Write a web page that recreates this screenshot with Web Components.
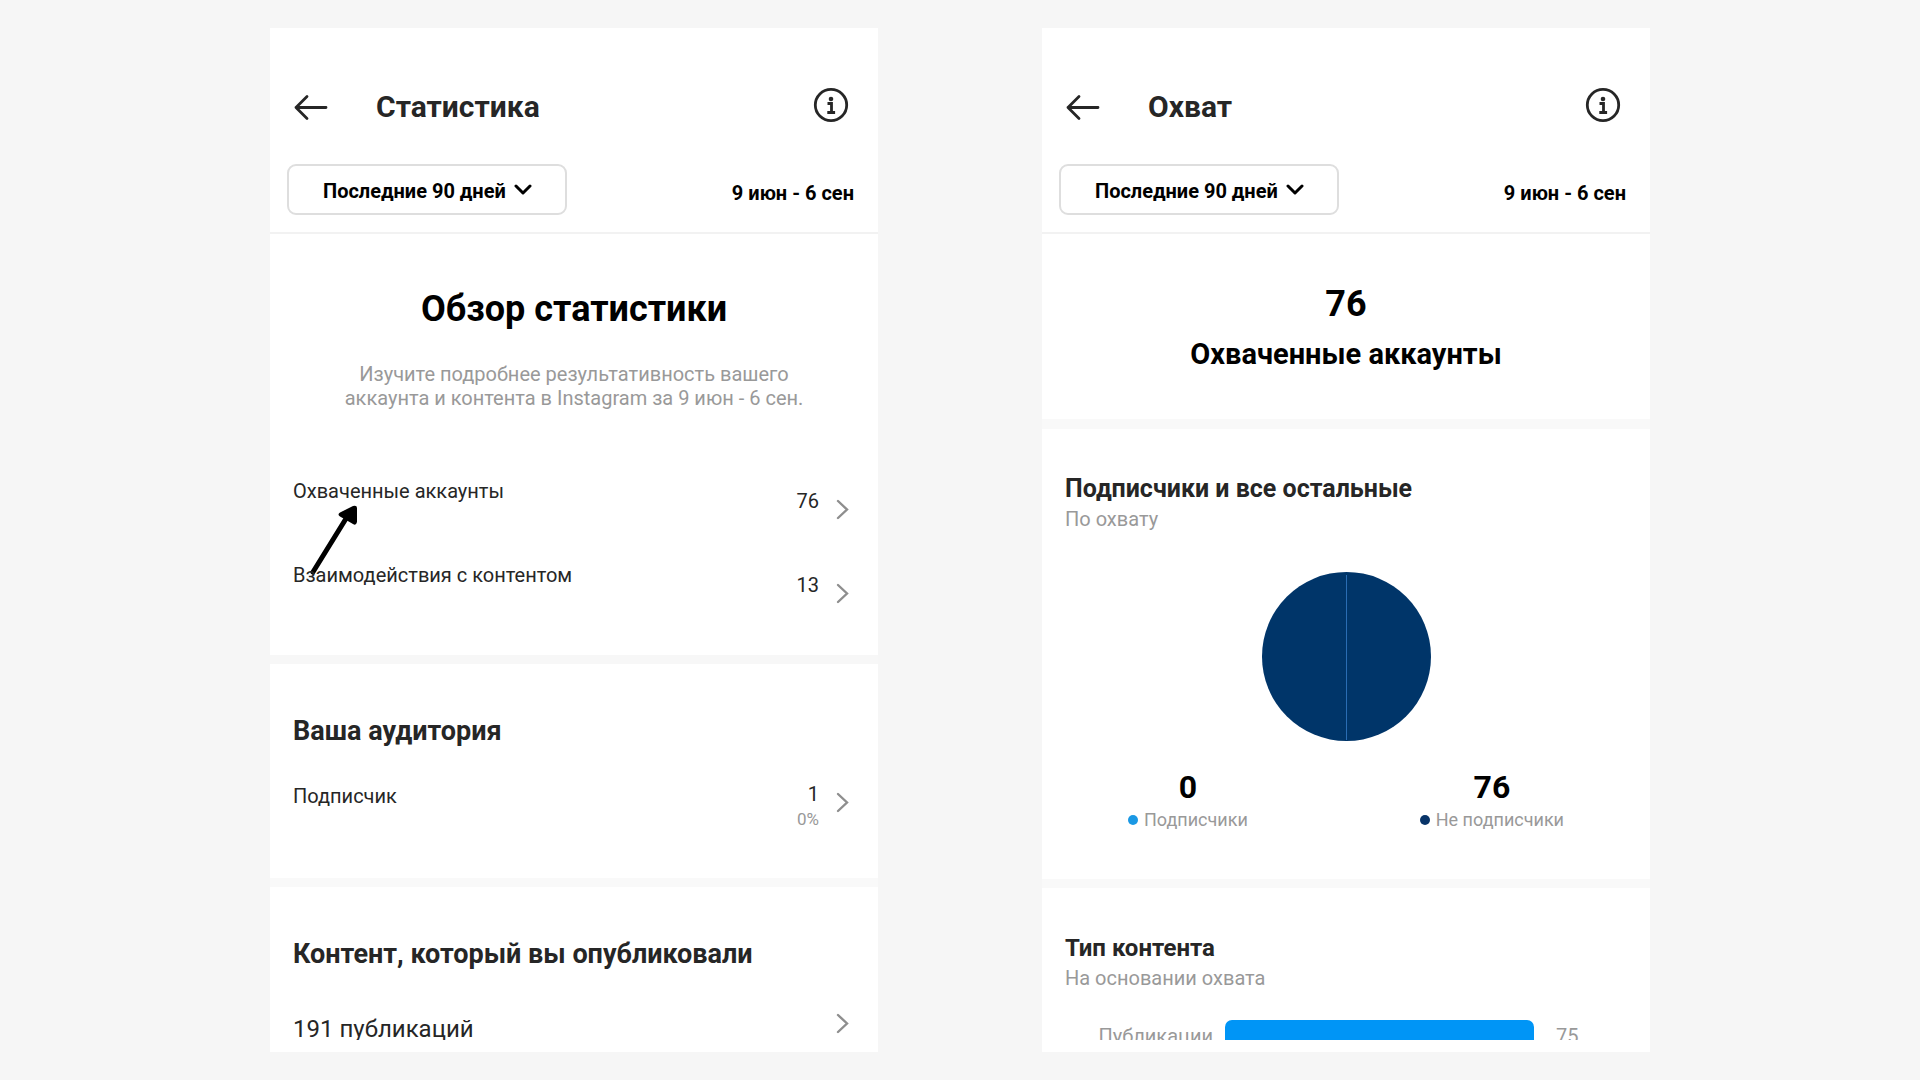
<!DOCTYPE html>
<html lang="ru">
<head>
<meta charset="utf-8">
<meta name="viewport" content="width=device-width, initial-scale=1">
<title>Статистика</title>
<style>
  * { box-sizing: border-box; }
  body {
    margin: 0;
    background: #f6f6f6;
    color: #262626;
    font-family: Roboto, "Liberation Sans", sans-serif;
    font-size: 20px;
    line-height: 24px;
  }
  main {
    display: grid;
    grid-template-columns: repeat(2, minmax(0, 608px));
    justify-content: center;
    gap: 164px;
    height: 100vh;
    padding: 28px 0;
  }
</style>
</head>
<body>
<main>
  <insight-screen heading="Статистика">
    <insight-section class="overview">
      <overview-intro>
        <span slot="title">Обзор статистики</span>
        Изучите подробнее результативность вашего аккаунта и контента в Instagram за 9 июн - 6 сен.
      </overview-intro>
      <metric-row value="76" pointer>Охваченные аккаунты</metric-row>
      <metric-row value="13">Взаимодействия с контентом</metric-row>
    </insight-section>
    <insight-section class="audience" heading="Ваша аудитория">
      <metric-row kind="detail" value="1" detail="0%">Подписчик</metric-row>
    </insight-section>
    <insight-section class="content" heading="Контент, который вы опубликовали">
      <metric-row kind="large">191 публикаций</metric-row>
    </insight-section>
  </insight-screen>

  <insight-screen heading="Охват">
    <insight-section class="reach">
      <reach-total value="76">Охваченные аккаунты</reach-total>
    </insight-section>
    <insight-section class="split" heading="Подписчики и все остальные" note="По охвату">
      <split-chart>
        <legend-item value="0" style="--dot:#1a98e4">Подписчики</legend-item>
        <legend-item value="76" style="--dot:#083468">Не подписчики</legend-item>
      </split-chart>
    </insight-section>
    <insight-section class="types" heading="Тип контента" note="На основании охвата">
      <bar-row value="75">Публикации</bar-row>
    </insight-section>
  </insight-screen>
</main>

<script>
  const reset = `*{box-sizing:border-box}h1,h2,h3,p{margin:0}`;

  function define(name, render) {
    customElements.define(name, class extends HTMLElement {
      constructor() {
        super();
        this.attachShadow({ mode: 'open' });
      }
      connectedCallback() {
        const template = document.createElement('template');
        template.innerHTML = render(this);
        this.shadowRoot.replaceChildren(template.content.cloneNode(true));
      }
    });
  }

  define('period-filter', () => `
    <style>${reset}
      :host { display: flex; justify-content: space-between; padding: 0 24px 17px 17px; border-bottom: 2px solid #f2f2f2; color: #000; font-weight: 700; }
      .box { display: grid; align-items: center; width: 280px; }
      select, svg { grid-area: 1 / 1; }
      select { appearance: none; width: 100%; height: 51px; padding: 2px 0 0 34px; border: 2px solid #dedede; border-radius: 9px; background: #fff; color: inherit; font: inherit; cursor: pointer; }
      svg { justify-self: end; margin-right: 35px; pointer-events: none; }
      time { align-self: center; padding-top: 6px; }
    </style>
    <label class="box">
      <select aria-label="Период"><option>Последние 90 дней</option></select>
      <svg width="18" height="12" viewBox="0 0 18 12" fill="none" stroke="#000" stroke-width="3" stroke-linecap="round" stroke-linejoin="round"><path d="M2 2l7 7 7-7"/></svg>
    </label>
    <time>9 июн - 6 сен</time>`);

  define('insight-screen', el => `
    <style>${reset}
      :host { display: flex; flex-direction: column; min-width: 0; min-height: 0; padding-bottom: 12px; background: #fff; }
      header { display: flex; align-items: center; padding: 61px 29px 39px 23px; }
      h1 { flex: 1; margin-left: 47px; font-size: 30px; line-height: 36px; font-weight: 700; }
      button { display: block; height: 36px; padding: 0; border: 0; background: none; color: inherit; cursor: pointer; }
      svg { display: block; overflow: visible; }
      .body { flex: 1; min-height: 0; overflow: hidden; }
    </style>
    <header>
      <button aria-label="Назад">
        <svg width="36" height="36" viewBox="0 0 36 36" fill="none" stroke="currentColor" stroke-width="2.8" stroke-linecap="round" stroke-linejoin="round"><path d="M33 18.500H3M14 7.500L3 18.500l11 11"/></svg>
      </button>
      <h1>${el.getAttribute('heading')}</h1>
      <button aria-label="Информация">
        <svg width="36" height="36" viewBox="0 0 36 36" fill="none" stroke="currentColor" stroke-width="2.8"><circle cx="18" cy="16" r="15.700"/><circle cx="18" cy="10" r="2.300" fill="currentColor" stroke="none"/><path d="M14.500 14.500h4v8.500M14.300 23.500h7.800" stroke-width="2.8"/></svg>
      </button>
    </header>
    <period-filter></period-filter>
    <div class="body"><slot></slot></div>`);

  define('insight-section', el => {
    const heading = el.getAttribute('heading');
    const note = el.getAttribute('note');
    return `
    <style>${reset}
      :host { display: block; border-bottom: 9px solid #f9f9f9; }
      :host(.overview) { padding: 53px 0 8px; border-color: #f7f7f7; }
      :host(.audience) { padding: 51px 0 46px; --heading-gap: 35px; }
      :host(.content) { padding: 51px 0 46px; --heading-gap: 43px; }
      :host(.reach) { padding: 48px 0 47px; border-width: 10px; }
      :host(.split) { padding: 46px 0 49px; --heading-gap: 41px; --heading-size: 25px; }
      :host(.types) { padding: 46px 0 49px; --heading-gap: 30px; --heading-size: 24px; }
      .head { padding: 0 23px; margin-bottom: var(--heading-gap); }
      h2 { font-size: 27px; line-height: 32px; font-weight: 700; }
      h2.noted { font-size: var(--heading-size); line-height: 28px; }
      p { margin-top: 4px; color: #999; }
    </style>
    ${heading ? `<div class="head"><h2 class="${note ? 'noted' : ''}">${heading}</h2>${note ? `<p>${note}</p>` : ''}</div>` : ''}
    <slot></slot>`;
  });

  define('overview-intro', () => `
    <style>${reset}
      :host { display: block; padding: 0 64px; margin-bottom: 69px; text-align: center; }
      h2 { margin-bottom: 31px; color: #000; font-size: 36px; line-height: 44px; font-weight: 700; }
      p { color: #999; }
    </style>
    <h2><slot name="title"></slot></h2>
    <p><slot></slot></p>`);

  define('metric-row', el => `
    <style>${reset}
      :host { display: block; position: relative; --label-top: 0px; --value-top: 10px; --chevron-top: 20px; --row: 84px; }
      :host([kind=detail]) { --label-top: 2px; --value-top: 0px; --chevron-top: 10px; --row: 50px; }
      :host([kind=large]) { --label-top: 2px; --chevron-top: 0px; --row: 36px; }
      a { display: flex; align-items: flex-start; min-height: var(--row); padding: 0 29px 0 23px; color: inherit; text-decoration: none; }
      .label { flex: 1; padding-top: var(--label-top); }
      :host([kind=large]) .label { font-size: 24px; line-height: 28px; }
      .value { padding-top: var(--value-top); text-align: right; }
      small { display: block; color: #999; font-size: 17px; line-height: 26px; }
      .chevron { margin: var(--chevron-top) 0 0 17px; }
      .pointer { position: absolute; left: 37px; top: 22px; }
    </style>
    <a href="#">
      <span class="label"><slot></slot></span>
      <span class="value">${el.getAttribute('value') || ''}${el.hasAttribute('detail') ? `<small>${el.getAttribute('detail')}</small>` : ''}</span>
      <svg class="chevron" width="13" height="21" viewBox="0 0 13 21" fill="none" stroke="#8e8e8e" stroke-width="2.4" stroke-linecap="round"><path d="M2 2l9 8.500L2 19"/></svg>
    </a>
    ${el.hasAttribute('pointer') ? `<svg class="pointer" width="56" height="76" viewBox="0 0 56 76"><path d="M6 71L40 16" stroke="#000" stroke-width="5" stroke-linecap="round"/><path d="M33 11.500L46 5q4-1 4 2V21q-1 4-4 2L33 15.500q-3-2 0-4Z" fill="#000"/></svg>` : ''}`);

  define('reach-total', el => `
    <style>${reset}
      :host { display: block; text-align: center; color: #000; font-weight: 700; }
      .number { margin-bottom: 10px; font-size: 36px; line-height: 44px; }
      h2 { font-size: 29px; line-height: 36px; }
    </style>
    <p class="number">${el.getAttribute('value')}</p>
    <h2><slot></slot></h2>`);

  define('split-chart', () => `
    <style>${reset}
      :host { display: block; }
      svg { display: block; margin: 0 auto 28px; }
      .legend { display: flex; justify-content: space-around; }
    </style>
    <svg width="169" height="169" viewBox="0 0 169 169"><circle cx="84.500" cy="84.500" r="84.500" fill="#003569"/><path d="M84.500 3V168" stroke="#2a6db4"/></svg>
    <div class="legend"><slot></slot></div>`);

  define('legend-item', el => `
    <style>${reset}
      :host { display: block; text-align: center; }
      .number { margin-bottom: 5px; color: #000; font-size: 32px; line-height: 36px; font-weight: 700; }
      .name { display: flex; align-items: center; gap: 6px; color: #999; font-size: 18px; line-height: 20px; }
      .name::before { content: ""; width: 10px; height: 10px; border-radius: 50%; background: var(--dot); }
    </style>
    <p class="number">${el.getAttribute('value')}</p>
    <p class="name"><slot></slot></p>`);

  define('bar-row', el => `
    <style>${reset}
      :host { display: grid; grid-template-columns: 148px minmax(0, 1fr) 80px; align-items: center; column-gap: 12px; padding: 0 24px 0 23px; color: #999; }
      .label { text-align: right; }
      .bar { height: 32px; border-radius: 7px; background: #0095f6; }
      .value { padding-left: 10px; }
    </style>
    <span class="label"><slot></slot></span>
    <span class="bar"></span>
    <span class="value">${el.getAttribute('value')}</span>`);
</script>
</body>
</html>
